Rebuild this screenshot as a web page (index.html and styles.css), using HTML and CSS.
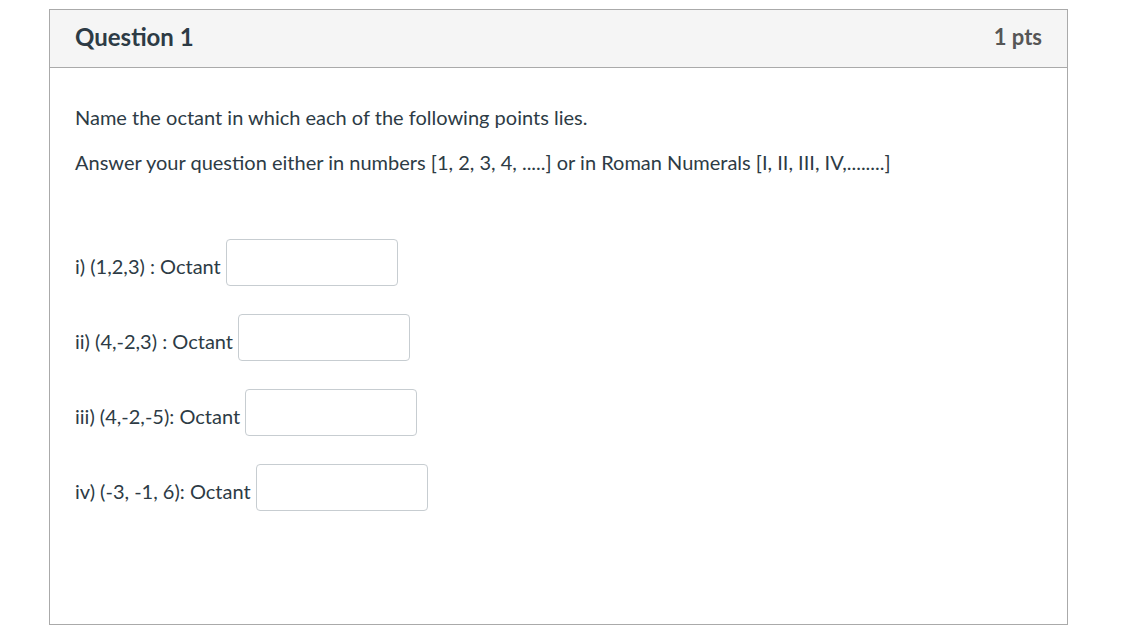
FILE: index.html
```html
<!DOCTYPE html>
<html>
<head>
<meta charset="utf-8">
<link rel="stylesheet" href="styles.css">
</head>
<body>
<div class="question">
  <div class="header">
    <h2 class="title">Question 1</h2>
    <span class="pts">1 pts</span>
  </div>
  <div class="content">
    <p class="text">Name the octant in which each of the following points lies.</p>
    <p class="text">Answer your question either in numbers [1, 2, 3, 4, .....] or in Roman Numerals [I, II, III, IV,........]</p>
    <div class="rows">
      <div class="row">i) (1,2,3) : Octant <span class="input"></span></div>
      <div class="row">ii) (4,-2,3) : Octant <span class="input"></span></div>
      <div class="row">iii) (4,-2,-5): Octant <span class="input"></span></div>
      <div class="row">iv) (-3, -1, 6): Octant <span class="input"></span></div>
    </div>
  </div>
</div>
</body>
</html>
```
FILE: styles.css
```css
* { box-sizing: border-box; }
html, body { margin: 0; padding: 0; background: #fff; }
body {
  font-family: Lato, "Open Sans", sans-serif;
  color: #2d3b45;
  padding: 9px 0 0 49px;
}
.question {
  width: 1019px;
  height: 616px;
  border: 1px solid #aaaaaa;
  display: flex;
  flex-direction: column;
}
.header {
  height: 58px;
  background: #f5f5f5;
  border-bottom: 1px solid #aaaaaa;
  display: flex;
  align-items: center;
  justify-content: space-between;
  padding: 0 25px 4px 25px;
}
.title {
  margin: 0;
  font-size: 24px;
  font-weight: 700;
  color: #2d3b45;
}
.pts {
  font-size: 22px;
  font-weight: 700;
  color: #565656;
}
.content {
  padding: 36px 25px 0 25px;
}
.text {
  margin: 0 0 18px 0;
  font-size: 20px;
  line-height: 27px;
}
.rows {
  padding-top: 50px;
  display: flex;
  flex-direction: column;
  gap: 29px;
}
.row {
  font-size: 20px;
  line-height: 44px;
  height: 46px;
  display: flex;
  align-items: baseline;
  gap: 5px;
}
.input {
  display: inline-block;
  width: 172px;
  height: 47px;
  border: 1px solid #c7cdd1;
  border-radius: 4px;
  background: #fff;
  align-self: center;
  margin-top: -10px;
}
```
